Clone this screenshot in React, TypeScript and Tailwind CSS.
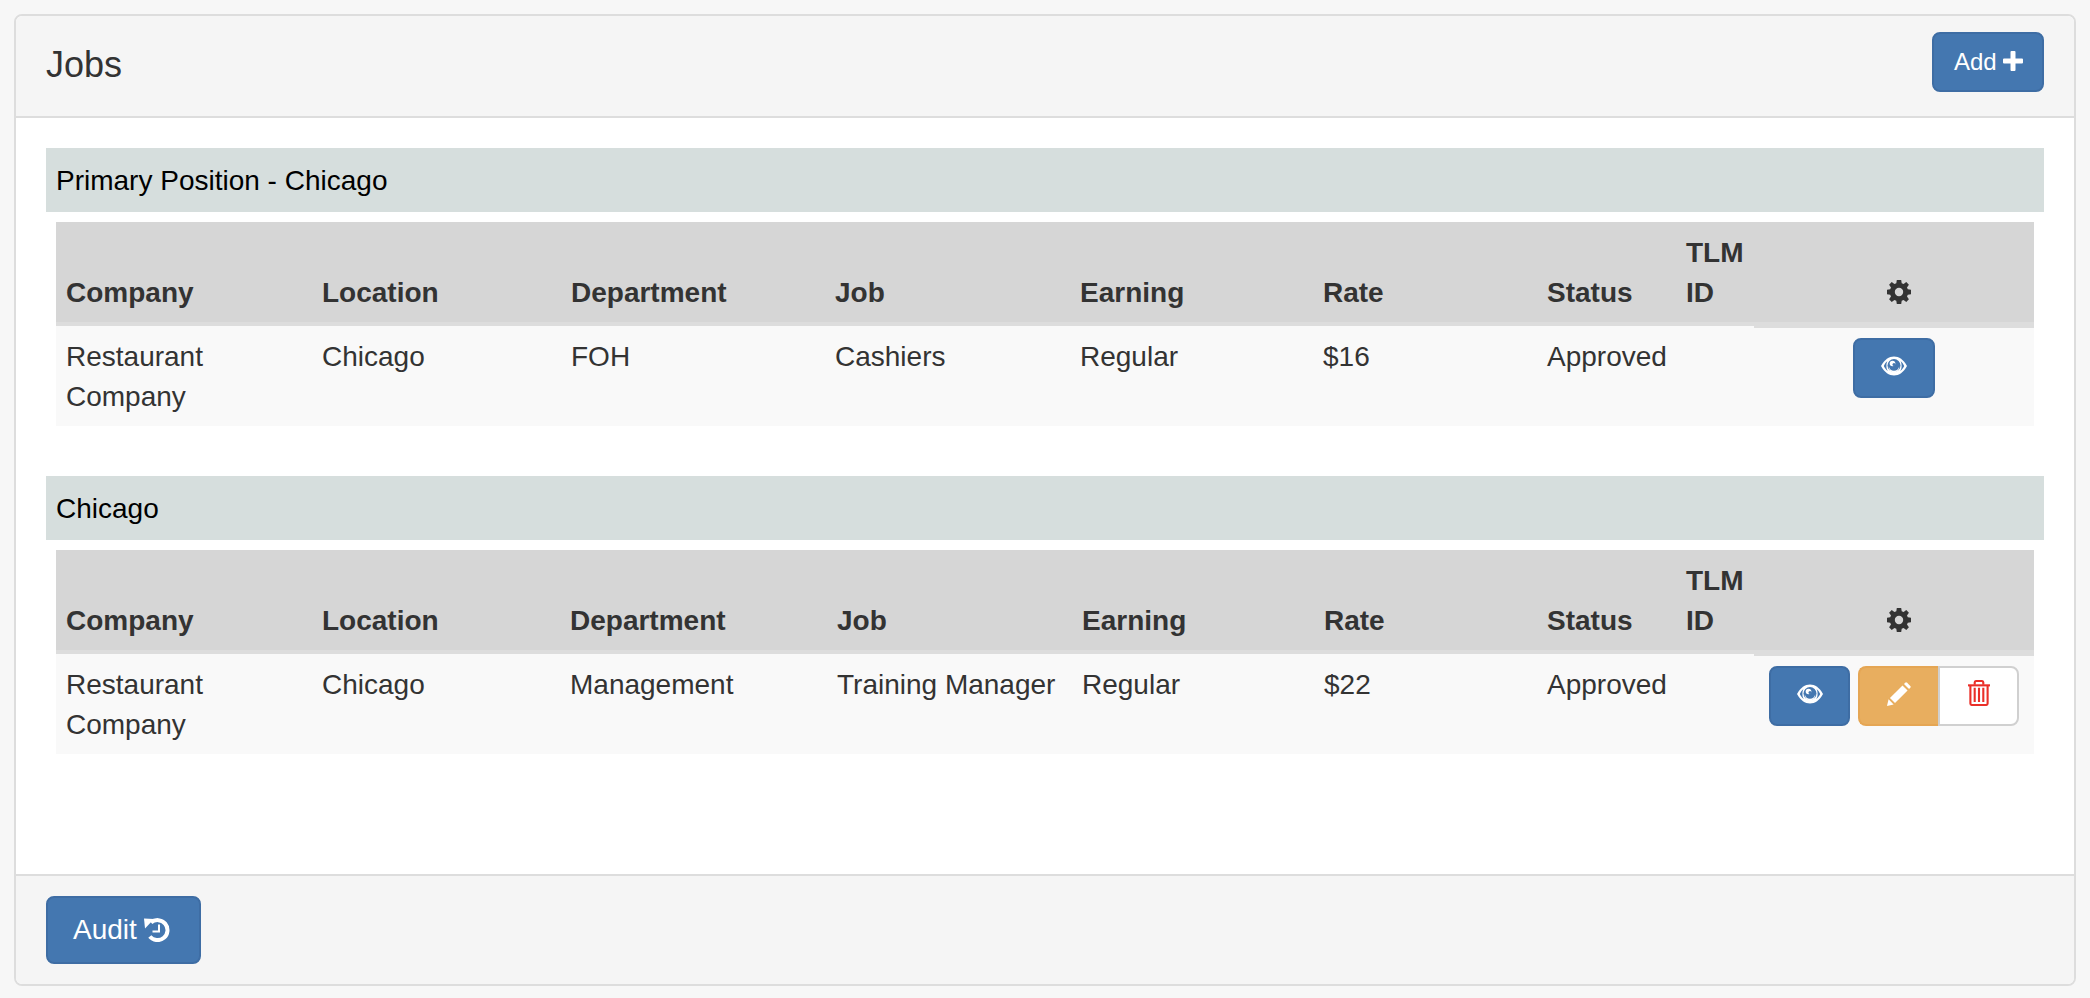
const fontStack = "font-['Liberation_Sans',Arial,sans-serif]"

const CogIcon = () => (
  <svg viewBox="0 0 24 24" className="inline-block h-[24px] w-[24px] fill-[#333] align-[-3px]">
    <path fillRule="evenodd" d="M9.8 0h4.400l.5 3.200 1.900.8 2.700-1.900 2.600 2.600-1.900 2.700.8 1.900 3.200.5v4.400l-3.200.5-.8 1.900 1.900 2.700-2.600 2.600-2.700-1.900-1.900.8-.5 3.200H9.800l-.5-3.200-1.900-.8-2.700 1.900-2.600-2.600 1.900-2.700-.8-1.900L0 14.200V9.800l3.200-.5.8-1.900-1.900-2.700 2.600-2.600 2.700 1.900 1.900-.8zM12 7.800a4.200 4.200 0 1 0 0 8.400 4.200 4.200 0 0 0 0-8.400z" />
  </svg>
)

const PlusIcon = () => (
  <svg viewBox="0 0 20 20" className="block h-[20px] w-[20px] fill-white">
    <path d="M7.500 1a1 1 0 0 1 1-1h3a1 1 0 0 1 1 1v6.500H19a1 1 0 0 1 1 1v3a1 1 0 0 1-1 1h-6.500V19a1 1 0 0 1-1 1h-3a1 1 0 0 1-1-1v-6.500H1a1 1 0 0 1-1-1v-3a1 1 0 0 1 1-1h6.500z" />
  </svg>
)

const EyeIcon = () => (
  <svg viewBox="0 0 26 20" className="block h-[20px] w-[26px]">
    <path className="fill-white" d="M0 10C3.500 3.500 8 .5 13 .5S22.500 3.500 26 10c-3.500 6.500-8 9.500-13 9.500S3.500 16.500 0 10z" />
    <path className="fill-[#4477b0]" d="M6.500 5C5 6.200 3.800 7.800 2.800 10c1 2 2.300 3.700 3.900 4.900-.8-1.300-1.300-3-1.300-4.900S5.700 6.300 6.500 5zM19.500 5c.8 1.300 1.100 3 1.100 5s-.5 3.600-1.300 4.900c1.600-1.200 2.900-2.900 3.900-4.900-1-2.200-2.200-3.800-3.700-5z" />
    <circle className="fill-[#4477b0]" cx="13" cy="9.500" r="6.500" />
    <path className="fill-white" d="M7.800 10.500c.6 2.800 2.700 4.300 5.200 4.300s4.600-1.500 5.200-4.300c.2 3.200-2.200 6-5.200 6s-5.400-2.800-5.200-6z" />
    <circle className="fill-white" cx="11.500" cy="7.500" r="2.800" />
    <circle className="fill-[#4477b0]" cx="13" cy="8.500" r="1.500" />
  </svg>
)

const PencilIcon = () => (
  <svg viewBox="0 0 26 26" className="block h-[24px] w-[24px] fill-white">
    <path d="M0 26l1.700-7.200 5.500 5.500z" />
    <path d="M3.200 17.300L16.800 3.700l5.500 5.500L8.700 22.800z" />
    <path d="M18.400 2.100L19.700.8a1.500 1.500 0 0 1 2.100 0l3.400 3.400a1.500 1.500 0 0 1 0 2.100l-1.300 1.300z" />
  </svg>
)

const TrashIcon = () => (
  <svg viewBox="0 0 23 27" className="block h-[26px] w-[22px] fill-none stroke-[#ea2f28] stroke-[2.200]">
    <path d="M0 5.500h23" />
    <path d="M7 5V2.500a1.500 1.500 0 0 1 1.500-1.500h6a1.500 1.500 0 0 1 1.500 1.500V5" />
    <path d="M2.500 5.500V24.500a1.500 1.500 0 0 0 1.500 1.500h15a1.500 1.500 0 0 0 1.500-1.500V5.500" />
    <path d="M7 8v15M11.500 8v15M16 8v15" />
  </svg>
)

const HistoryIcon = () => (
  <svg viewBox="0 0 26 24" className="block h-[24px] w-[26px]">
    <path className="fill-none stroke-white stroke-[4]" d="M7 4.500A10 10 0 1 1 5.800 18.500" />
    <path className="fill-white" d="M0 .5l10 .5-9 9.500z" />
    <path className="fill-none stroke-white stroke-2" d="M15 6.500v7H8.500" />
  </svg>
)

const blueBtn = "rounded-lg border-2 border-[#3e6da4] bg-[#4477b0] text-white"

type Job = {
  department: string
  job: string
  rate: string
  editable?: boolean
}

const headers = ["Company", "Location", "Department", "Job", "Earning", "Rate", "Status", "TLM ID"]

const JobTable = ({ job, widths }: { job: Job; widths: string[] }) => {
  const cells = ["Restaurant Company", "Chicago", job.department, job.job, "Regular", job.rate, "Approved", ""]
  return (
    <div className="mx-[10px] mt-[10px]">
      <table className="w-full table-fixed border-separate border-spacing-0 text-[28px] leading-[40px] text-[#333]">
        <thead>
          <tr className="bg-[#d6d6d6]">
            {headers.map((h, i) => (
              <th key={h} className={`${widths[i]} border-b-4 border-[#ddd] px-[10px] pt-[11px] pb-[9px] text-left align-bottom font-bold`}>
                {h}
              </th>
            ))}
            <th className="w-[280px] border-b-4 border-[#ddd] p-[10px] pl-[20px] text-center align-bottom">
              <CogIcon />
            </th>
          </tr>
        </thead>
        <tbody>
          <tr className="bg-[#f9f9f9]">
            {cells.map((c, i) => (
              <td key={i} className="px-[10px] pt-[11px] pb-[9px] align-top">
                {c}
              </td>
            ))}
            <td className="border-t-2 border-[#ddd] px-[10px] pt-[10px] pb-[8px] align-top">
              <div className="flex justify-center">
                {job.editable ? (
                  <>
                    <button className={`${blueBtn} mr-[8px] flex h-[60px] w-[81px] items-center justify-center`}>
                      <span className="-mt-[4px]">
                        <EyeIcon />
                      </span>
                    </button>
                    <button className="flex h-[60px] w-[80px] items-center justify-center rounded-l-lg border-2 border-r-0 border-[#e5a654] bg-[#e8ae5f]">
                      <span className="-mt-[4px]">
                        <PencilIcon />
                      </span>
                    </button>
                    <button className="flex h-[60px] w-[81px] items-center justify-center rounded-r-lg border-2 border-[#d0d0d0] bg-white">
                      <span className="-mt-[6px]">
                        <TrashIcon />
                      </span>
                    </button>
                  </>
                ) : (
                  <button className={`${blueBtn} flex h-[60px] w-[82px] items-center justify-center`}>
                    <span className="-mt-[4px]">
                      <EyeIcon />
                    </span>
                  </button>
                )}
              </div>
            </td>
          </tr>
        </tbody>
      </table>
    </div>
  )
}

const App = () => {
  return (
    <div className={`${fontStack} h-[998px] overflow-hidden bg-[#f7f7f7] px-[14px] pt-[14px]`}>
      <div className="flex h-[972px] flex-col overflow-hidden rounded-lg border-2 border-[#ddd] bg-white">
        <div className="flex h-[102px] shrink-0 items-center justify-between border-b-2 border-[#ddd] bg-[#f5f5f5] px-[30px]">
          <h1 className="-mt-[2px] text-[36px] leading-[40px] font-normal text-[#333]">Jobs</h1>
          <button className={`${blueBtn} -mt-[8px] flex h-[60px] w-[112px] items-center gap-[6px] pl-[20px] text-[24px]`}>
            <span>Add</span>
            <span className="-mt-[2px]">
              <PlusIcon />
            </span>
          </button>
        </div>

        <div className="flex-1 px-[30px] pt-[30px]">
          <div className="h-[64px] bg-[#d6dedd] px-[10px] text-[28px] leading-[66px] text-black">Primary Position - Chicago</div>
          <JobTable
            job={{ department: "FOH", job: "Cashiers", rate: "$16" }}
            widths={["w-[256px]", "w-[249px]", "w-[264px]", "w-[245px]", "w-[243px]", "w-[224px]", "w-[139px]", "w-[78px]"]}
          />

          <div className="mt-[50px] h-[64px] bg-[#d6dedd] px-[10px] text-[28px] leading-[66px] text-black">Chicago</div>
          <JobTable
            job={{ department: "Management", job: "Training Manager", rate: "$22", editable: true }}
            widths={["w-[256px]", "w-[248px]", "w-[267px]", "w-[245px]", "w-[242px]", "w-[223px]", "w-[139px]", "w-[78px]"]}
          />
        </div>

        <div className="h-[110px] shrink-0 border-t-2 border-[#ddd] bg-[#f5f5f5] px-[30px] pt-[20px]">
          <button className={`${blueBtn} flex h-[68px] w-[155px] items-center gap-[7px] pl-[25px] text-[28px]`}>
            <span>Audit</span>
            <HistoryIcon />
          </button>
        </div>
      </div>
    </div>
  )
}

export default App
